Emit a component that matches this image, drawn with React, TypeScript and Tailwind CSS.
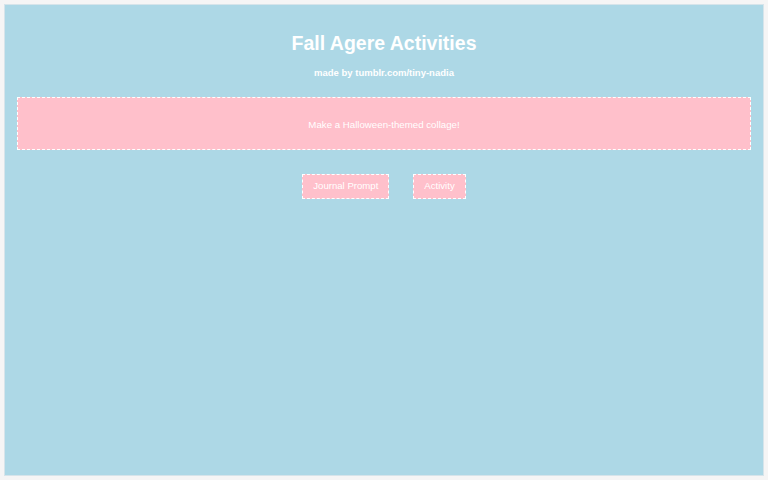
const activity = "Make a Halloween-themed collage!";

export default function App() {
  return (
    <div className="h-[480px] bg-[#f5f5f5] p-1 font-['Liberation_Sans',Arial,sans-serif] text-white">
      <div className="h-full border border-[#d6e4ea] bg-[#add8e6] px-3">
        <h1 className="pt-[27px] text-center text-[19.5px] font-bold leading-[23px]">
          Fall Agere Activities
        </h1>
        <p className="mt-[12px] text-center text-[9.5px] font-bold leading-[12px]">
          made by tumblr.com/tiny-nadia
        </p>
        <div className="mt-[18px] flex h-[53px] items-center justify-center border border-dashed border-white bg-[#ffc0cb] pt-[4px] text-[9.7px]">
          {activity}
        </div>
        <div className="mt-[24px] flex justify-center gap-[24px]">
          <button
            type="button"
            className="h-[25px] border border-dashed border-white bg-[#ffc0cb] px-[10px] text-[9.6px]"
          >
            Journal Prompt
          </button>
          <button
            type="button"
            className="h-[25px] border border-dashed border-white bg-[#ffc0cb] px-[10px] text-[9.6px]"
          >
            Activity
          </button>
        </div>
      </div>
    </div>
  );
}
